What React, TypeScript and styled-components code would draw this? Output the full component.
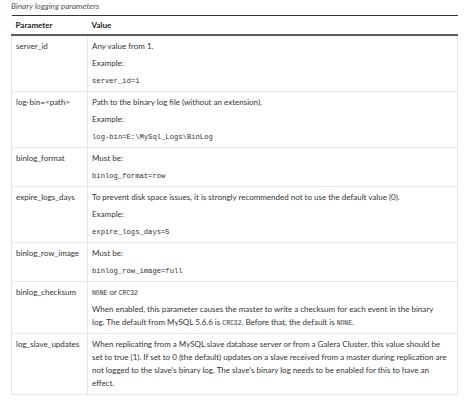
import styled, { createGlobalStyle } from "styled-components";

const GlobalStyle = createGlobalStyle`
  html, body {
    margin: 0;
    padding: 0;
    background: #ffffff;
  }
  body {
    font-family: Lato, "Liberation Sans", sans-serif;
    color: #333333;
  }
`;

const Page = styled.div`
  width: 447px;
  margin-left: 11px;
  padding-top: 1px;
`;

const Caption = styled.div`
  font-style: italic;
  font-size: 8.2px;
  line-height: 10px;
  color: #555555;
  margin-bottom: 4px;
`;

const Table = styled.table`
  width: 100%;
  border-collapse: collapse;
  font-size: 8px;
`;

const HeadCell = styled.th`
  text-align: left;
  font-weight: 700;
  color: #222222;
  line-height: 12px;
  padding: 3px 3px 3px 4px;
  border-top: 1px solid #333333;
  border-bottom: 2px solid #5c5c5c;
`;

const Row = styled.tr`
  border-bottom: 1px solid #e6e6e6;
  border-left: 1px solid #e6e6e6;
  border-right: 1px solid #e6e6e6;
`;

const Cell = styled.td<{ $label?: boolean }>`
  vertical-align: top;
  padding: 4px 3px 4px 4px;
  width: ${({ $label }) => ($label ? "68px" : "auto")};
  border-right: ${({ $label }) => ($label ? "1px solid #e6e6e6" : "none")};
  white-space: ${({ $label }) => ($label ? "nowrap" : "normal")};
  line-height: 13px;
`;

const Para = styled.p<{ $broken?: boolean }>`
  margin: 0;
  line-height: 13px;
  white-space: ${({ $broken }) => ($broken ? "nowrap" : "normal")};
  & + & {
    margin-top: 4px;
  }
`;

const Code = styled.code<{ $small?: boolean }>`
  font-family: "Liberation Mono", "DejaVu Sans Mono", monospace;
  font-size: ${({ $small }) => ($small ? "6.4px" : "7.2px")};
  line-height: 1;
  color: #333333;
`;

type Entry = {
  name: string;
  value: React.ReactNode[];
  broken?: boolean;
};

const rows: Entry[] = [
  {
    name: "server_id",
    value: ["Any value from 1.", "Example:", <Code>server_id=1</Code>],
  },
  {
    name: "log-bin=<path>",
    value: [
      "Path to the binary log file (without an extension).",
      "Example:",
      <Code>log-bin=E:\MySql_Logs\BinLog</Code>,
    ],
  },
  {
    name: "binlog_format",
    value: ["Must be:", <Code>binlog_format=row</Code>],
  },
  {
    name: "expire_logs_days",
    value: [
      "To prevent disk space issues, it is strongly recommended not to use the default value (0).",
      "Example:",
      <Code>expire_logs_days=5</Code>,
    ],
  },
  {
    name: "binlog_row_image",
    value: ["Must be:", <Code>binlog_row_image=full</Code>],
  },
  {
    name: "binlog_checksum",
    broken: true,
    value: [
      <>
        <Code $small>NONE</Code> or <Code $small>CRC32</Code>
      </>,
      <>
        When enabled, this parameter causes the master to write a checksum for each event in the binary
        <br />
        log. The default from MySQL 5.6.6 is <Code $small>CRC32</Code>. Before that, the default is{" "}
        <Code $small>NONE</Code>.
      </>,
    ],
  },
  {
    name: "log_slave_updates",
    broken: true,
    value: [
      <>
        When replicating from a MySQL slave database server or from a Galera Cluster, this value should be
        <br />
        set to true (1). If set to 0 (the default) updates on a slave received from a master during replication are
        <br />
        not logged to the slave's binary log. The slave's binary log needs to be enabled for this to have an
        <br />
        effect.
      </>,
    ],
  },
];

export default function App() {
  return (
    <Page>
      <GlobalStyle />
      <Caption>Binary logging parameters</Caption>
      <Table>
        <thead>
          <tr>
            <HeadCell>Parameter</HeadCell>
            <HeadCell>Value</HeadCell>
          </tr>
        </thead>
        <tbody>
          {rows.map(r => (
            <Row key={r.name}>
              <Cell $label>{r.name}</Cell>
              <Cell>
                {r.value.map((v, i) => (
                  <Para key={i} $broken={r.broken}>
                    {v}
                  </Para>
                ))}
              </Cell>
            </Row>
          ))}
        </tbody>
      </Table>
    </Page>
  );
}
